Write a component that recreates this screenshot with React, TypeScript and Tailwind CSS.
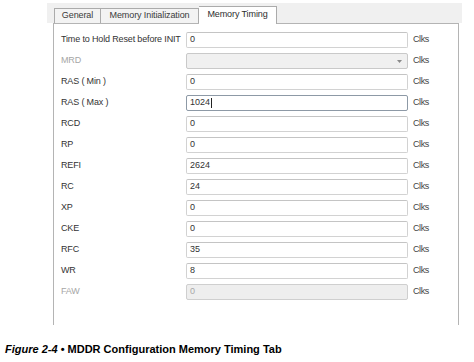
import React from 'react';

type Row = {
    label: string;
    value: string;
    disabled?: boolean;
    select?: boolean;
    focused?: boolean;
};

const rows: Row[] = [
    { label: 'Time to Hold Reset before INIT', value: '0' },
    { label: 'MRD', value: '', disabled: true, select: true },
    { label: 'RAS ( Min )', value: '0' },
    { label: 'RAS ( Max )', value: '1024', focused: true },
    { label: 'RCD', value: '0' },
    { label: 'RP', value: '0' },
    { label: 'REFI', value: '2624' },
    { label: 'RC', value: '24' },
    { label: 'XP', value: '0' },
    { label: 'CKE', value: '0' },
    { label: 'RFC', value: '35' },
    { label: 'WR', value: '8' },
    { label: 'FAW', value: '0', disabled: true },
];

// Field - one label / box / unit line
function Field({ row }: { row: Row }) {
    const box = row.select
        ? 'border-[#c9c9c9] bg-[#f0f0f0]'
        : row.disabled
          ? 'border-[#cfcfcf] bg-[#eeeeee] text-[#a8a8a8]'
          : row.focused
            ? 'border-[#8d99a6] bg-white text-[#333]'
            : 'border-[#d2d2d2] border-t-[#c4c4c4] bg-white text-[#333]';

    return (
        <div className="flex h-[16px] items-center">
            <div className={`w-[125px] tracking-[-0.15px] ${row.disabled ? 'text-[#a6a6a6]' : 'text-[#333]'}`}>
                {row.label}
            </div>
            <div className={`flex h-[16px] w-[222px] items-center rounded-[2px] border pl-[3px] ${box}`}>
                <span>{row.value}</span>
                {row.focused && <span className="ml-px h-[10px] w-px bg-[#222]" />}
                {row.select && (
                    <svg className="ml-auto mr-[5px]" width="5" height="3" viewBox="0 0 5 3">
                        <path d="M0 0 L5 0 L2.5 3 Z" fill="#8a8a8a" />
                    </svg>
                )}
            </div>
            <div className="ml-[5px] tracking-[-0.4px] text-[#444]">Clks</div>
        </div>
    );
}

// Component - App
export default function App() {
    return (
        <div className="h-[362px] w-[474px] bg-white font-['Liberation_Sans',Arial,sans-serif] text-[9px]">
            <div className="pl-[47px] pt-[3px]">
                {/* Tabs */}
                <div className="flex h-[20px] w-[415px] items-end bg-[#f0f0f0] pl-[7px] tracking-[-0.1px]">
                    <div className="flex h-[15px] w-[47px] items-center justify-center border border-b-0 border-[#ababab] bg-[#f3f3f3] text-[#3a3a3a]">
                        General
                    </div>
                    <div className="flex h-[15px] w-[98px] items-center justify-center border border-b-0 border-l-0 border-[#ababab] bg-[#f3f3f3] text-[#3a3a3a]">
                        Memory Initialization
                    </div>
                    <div className="relative z-10 -mb-px flex h-[18px] w-[78px] items-center justify-center border border-b-0 border-l-0 border-[#ababab] bg-white pb-[2px] text-[#2e2e2e]">
                        Memory Timing
                    </div>
                </div>

                {/* Panel */}
                <div className="ml-[6px] flex h-[302px] w-[406px] flex-col gap-[5px] border border-b-0 border-[#b4b4b4] bg-white pl-[7px] pt-[8px]">
                    {rows.map((row) => (
                        <Field key={row.label} row={row} />
                    ))}
                </div>
            </div>

            {/* Caption */}
            <div className="mt-[16px] pl-[5px] text-[11px] font-bold text-black">
                <span className="italic">Figure 2-4</span> • MDDR Configuration Memory Timing Tab
            </div>
        </div>
    );
}
